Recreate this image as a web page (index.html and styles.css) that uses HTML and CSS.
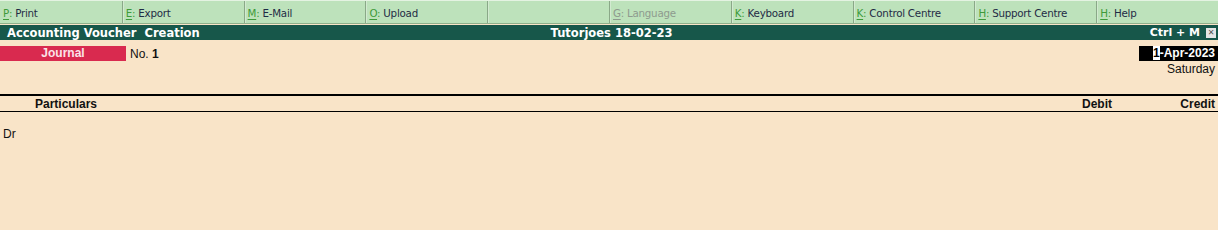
FILE: index.html
```html
<!DOCTYPE html>
<html>
<head>
<meta charset="utf-8">
<link rel="stylesheet" href="styles.css">
</head>
<body>
<div class="toolbar">
  <div class="btn"><span class="key">P</span><span class="col">:</span> Print</div>
  <div class="btn"><span class="key">E</span><span class="col">:</span> Export</div>
  <div class="btn"><span class="key">M</span><span class="col">:</span> E-Mail</div>
  <div class="btn"><span class="key">O</span><span class="col">:</span> Upload</div>
  <div class="btn"></div>
  <div class="btn disabled"><span class="key">G</span><span class="col">:</span> Language</div>
  <div class="btn"><span class="key">K</span><span class="col">:</span> Keyboard</div>
  <div class="btn"><span class="key">K</span><span class="col">:</span> Control Centre</div>
  <div class="btn"><span class="key">H</span><span class="col">:</span> Support Centre</div>
  <div class="btn"><span class="key">H</span><span class="col">:</span> Help</div>
</div>
<div class="titlebar">
  <span class="t-left">Accounting Voucher&nbsp; Creation</span>
  <span class="t-center">Tutorjoes 18-02-23</span>
  <span class="t-right">Ctrl + M <span class="close">✕</span></span>
</div>
<div class="voucher">
  <div class="vrow">
    <div class="vtype">Journal</div>
    <div class="vno">No. <b>1</b></div>
    <div class="vdate"><span class="cur">1</span>-Apr-2023</div>
  </div>
  <div class="vday">Saturday</div>
  <div class="thead">
    <span class="th-part">Particulars</span>
    <span class="th-debit">Debit</span>
    <span class="th-credit">Credit</span>
  </div>
  <div class="entry">Dr</div>
</div>
</body>
</html>
```
FILE: styles.css
```css
html, body {
  margin: 0;
  padding: 0;
}
body {
  width: 1218px;
  height: 230px;
  background: #f9e4c8;
  font-family: "Liberation Sans", Arial, sans-serif;
  font-size: 12px;
  color: #111;
  overflow: hidden;
}
.toolbar {
  display: grid;
  grid-template-columns: repeat(10, 1fr);
  height: 24px;
  background: #bde2bb;
  border-top: 1px solid #e4f3e2;
  box-sizing: border-box;
  border-bottom: 1px solid #8fb08c;
}
.btn {
  font-family: "DejaVu Sans", Tahoma, sans-serif;
  font-size: 10.3px;
  color: #1f2b45;
  padding: 6px 0 0 3px;
  box-shadow: inset 1px 0 0 #d2ead0;
  white-space: nowrap;
  letter-spacing: -0.25px;
}
.btn:first-child { box-shadow: none; }
.btn + .btn { border-left: 1px solid #8aa888; }
.key {
  color: #3e9a3a;
  text-decoration: underline;
  text-underline-offset: 2px;
}
.col { color: #3e9a3a; }
.disabled, .disabled .key, .disabled .col { color: #8e9a8e; }
.titlebar {
  display: flex;
  align-items: center;
  height: 15px;
  margin-top: 1px;
  background: #17574a;
  color: #fff;
  font-family: "DejaVu Sans", Verdana, sans-serif;
  font-weight: bold;
  font-size: 11.5px;
}
.t-left { padding-left: 7px; flex: 1; }
.t-center { flex: 1; text-align: center; }
.t-right { flex: 1; text-align: right; padding-right: 2px; display: flex; justify-content: flex-end; align-items: center; gap: 6px; font-size: 11px; }
.close {
  display: inline-block;
  width: 10px;
  height: 10px;
  background: #e6e6e6;
  color: #555;
  font-size: 8px;
  line-height: 10px;
  text-align: center;
  font-weight: bold;
}
.voucher { padding-top: 6px; }
.vrow {
  display: flex;
  align-items: center;
  height: 15px;
}
.vtype {
  width: 126px;
  height: 15px;
  background: #d92a4f;
  color: #fbe3e8;
  font-weight: bold;
  text-align: center;
  line-height: 15px;
}
.vno { margin-left: 4px; }
.vdate {
  margin-left: auto;
  background: #000;
  color: #fff;
  font-weight: bold;
  height: 15px;
  line-height: 15px;
  padding: 0 3px;
  width: 73px;
  text-align: right;
}
.cur { background: #fff; color: #000; }
.vday {
  text-align: right;
  padding-right: 3px;
  margin-top: 1px;
}
.thead {
  margin-top: 18px;
  border-top: 2px solid #000;
  border-bottom: 1px solid #000;
  height: 15px;
  display: flex;
  align-items: center;
  font-weight: bold;
}
.th-part { margin-left: 35px; flex: 1; }
.th-debit { width: 60px; text-align: right; margin-right: 3px; }
.th-credit { width: 103px; text-align: right; padding-right: 3px; box-sizing: border-box; }
.entry {
  padding-left: 3px;
  margin-top: 15px;
}
```
